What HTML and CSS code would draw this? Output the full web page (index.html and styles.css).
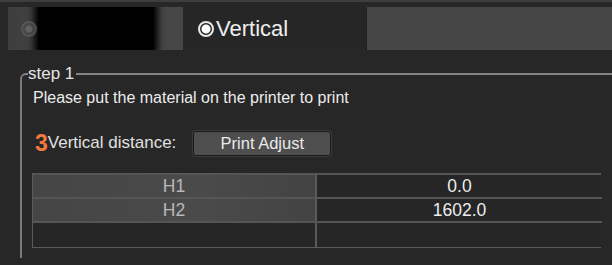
FILE: index.html
```html
<!DOCTYPE html>
<html>
<head>
<meta charset="utf-8">
<link rel="stylesheet" href="styles.css">
</head>
<body>
<div class="page">
  <div class="topline"></div>
  <div class="tabs">
    <div class="tab tab-first">
      <span class="radio radio-ghost"></span>
      <span class="redact"></span>
    </div>
    <div class="tab tab-active">
      <span class="radio radio-on"></span>
      <span class="tab-label">Vertical</span>
    </div>
    <div class="tab tab-rest"></div>
  </div>
  <fieldset class="step">
    <legend class="step-legend">step 1</legend>
    <p class="instr">Please put the material on the printer to print</p>
    <div class="dist-row">
      <span class="num">3</span>
      <span class="dist-label">Vertical distance:</span>
      <button class="btn">Print Adjust</button>
    </div>
    <div class="grid">
      <div class="cell head">H1</div>
      <div class="cell val">0.0</div>
      <div class="cell head">H2</div>
      <div class="cell val">1602.0</div>
      <div class="cell empty"></div>
      <div class="cell empty"></div>
    </div>
  </fieldset>
</div>
</body>
</html>
```

FILE: styles.css
```css
* { box-sizing: border-box; }
html, body {
  margin: 0;
  padding: 0;
  background: #272727;
  overflow: hidden;
}
.page {
  width: 612px;
  height: 265px;
  overflow: hidden;
  font-family: "Liberation Sans", Arial, sans-serif;
  color: #e8e8e8;
}
.topline {
  height: 2px;
  background: #3e3e3e;
  margin-bottom: 5px;
}
.tabs {
  display: flex;
  height: 43px;
  padding-left: 8px;
}
.tab {
  height: 43px;
  display: flex;
  align-items: center;
}
.tab-first {
  width: 175px;
  background: linear-gradient(90deg, #3e3e3e, #4a4a4a 50%, #474747);
  padding-left: 13px;
  overflow: hidden;
}
.radio {
  width: 16px;
  height: 16px;
  border-radius: 50%;
  flex: none;
}
.radio-ghost {
  border: 2px solid #5a5a5a;
  background: radial-gradient(circle, #6a6a6a 0 3px, #4a4a4a 4px);
  opacity: 0.8;
}
.redact {
  width: 116px;
  height: 43px;
  background: #000;
  box-shadow: 0 0 7px 4px #000;
  margin-left: 1px;
  flex: none;
}
.tab-active {
  width: 183px;
  background: #262626;
  padding-left: 15px;
}
.radio-on {
  border: 2px solid #e8e8e8;
  background: radial-gradient(circle, #ffffff 0 4px, #262626 5px);
}
.tab-label {
  font-size: 22px;
  margin-left: 2px;
  color: #eeeeee;
}
.tab-rest {
  flex: 1;
  background: #464646;
  border-left: 1px solid #222;
}
.step {
  margin: 16px -20px 0 20px;
  padding: 7px 0 0 11px;
  border: 2px solid #858585;
  border-left-color: #7a7a7a;
  border-right: none;
  border-bottom: none;
  border-radius: 6px 0 0 0;
  height: 192px;
}
.step-legend {
  font-size: 17px;
  color: #e4e4e4;
  padding: 0 2px 0 0;
  margin-left: -5px;
  line-height: 16px;
}
.instr {
  margin: 0;
  font-size: 16px;
  line-height: 18px;
  color: #ececec;
}
.dist-row {
  display: flex;
  align-items: center;
  margin-top: 23px;
  height: 26px;
  padding-left: 2px;
}
.num {
  color: #f47a3c;
  font-size: 23px;
  font-weight: bold;
  line-height: 22px;
}
.dist-label {
  font-size: 17px;
  color: #e0e0e0;
  margin-left: 0;
}
.btn {
  margin-left: 17px;
  width: 138px;
  height: 25px;
  background: #4e4e4e;
  border: 1px solid #1a1a1a;
  border-radius: 3px;
  color: #eaeaea;
  font-family: "Liberation Sans", Arial, sans-serif;
  font-size: 16.5px;
  padding: 0;
  box-shadow: 0 0 0 1px #3a3a3a;
}
.grid {
  display: grid;
  grid-template-columns: 284px 285px;
  grid-auto-rows: 24px;
  margin-top: 17px;
  margin-left: -1px;
  width: 569px;
  border: 1px solid #5a5a5a;
  border-top: 2px solid #565656;
}
.cell {
  display: flex;
  align-items: center;
  justify-content: center;
  font-size: 17.5px;
  border-bottom: 2px solid #555;
}
.cell:nth-last-child(-n+2) { border-bottom: 0; }
.head {
  background: linear-gradient(90deg, #454545, #4a4a4a 60%, #434343);
  color: #b8b8b8;
  border-right: 2px solid #5a5a5a;
}
.val {
  background: #262626;
  color: #ececec;
}
.empty {
  background: #262626;
}
.empty:nth-last-child(2) { border-right: 2px solid #5a5a5a; }
```
